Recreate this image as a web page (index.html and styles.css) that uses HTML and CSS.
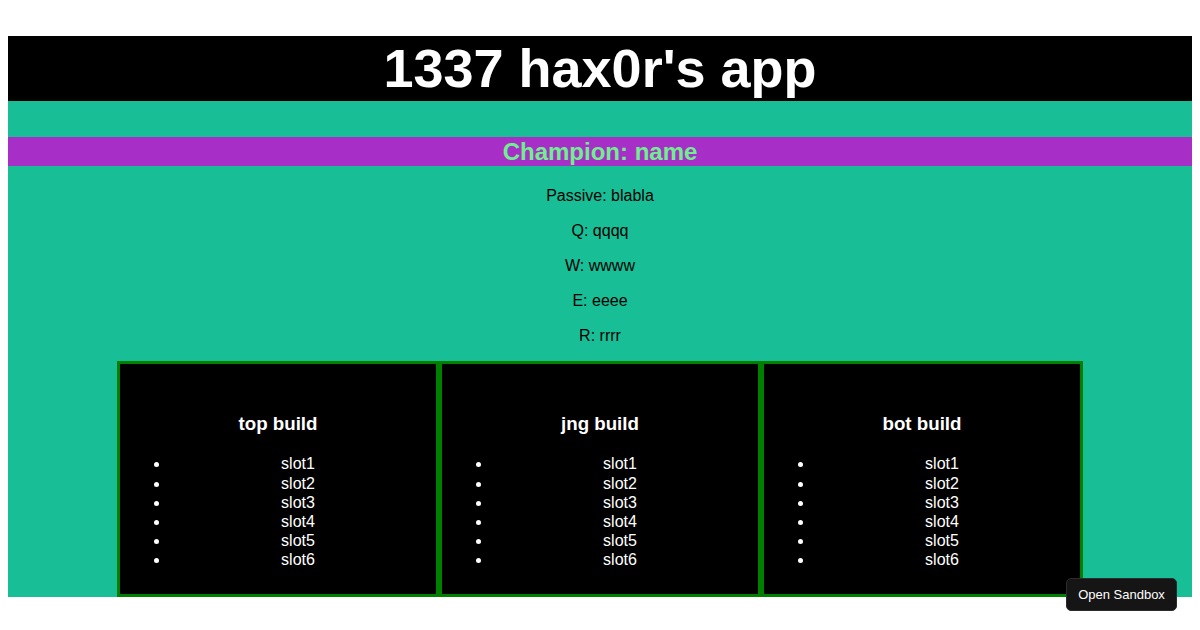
FILE: index.html
```html
<!DOCTYPE html>
<html lang="en">
<head>
  <meta charset="UTF-8">
  <title>1337 hax0r's app</title>
  <link rel="stylesheet" href="styles.css">
</head>
<body>
  <div class="app">
    <h1 class="title">1337 hax0r's app</h1>

    <div class="champion">
      <h2>Champion: name</h2>
      <p>Passive: blabla</p>
      <p>Q: qqqq</p>
      <p>W: wwww</p>
      <p>E: eeee</p>
      <p>R: rrrr</p>

      <div class="builds">
        <div class="build">
          <h3>top build</h3>
          <ul>
            <li>slot1</li>
            <li>slot2</li>
            <li>slot3</li>
            <li>slot4</li>
            <li>slot5</li>
            <li>slot6</li>
          </ul>
        </div>
        <div class="build">
          <h3>jng build</h3>
          <ul>
            <li>slot1</li>
            <li>slot2</li>
            <li>slot3</li>
            <li>slot4</li>
            <li>slot5</li>
            <li>slot6</li>
          </ul>
        </div>
        <div class="build">
          <h3>bot build</h3>
          <ul>
            <li>slot1</li>
            <li>slot2</li>
            <li>slot3</li>
            <li>slot4</li>
            <li>slot5</li>
            <li>slot6</li>
          </ul>
        </div>
      </div>
    </div>
  </div>

  <a class="sandbox-btn" href="#">Open Sandbox</a>
</body>
</html>
```

FILE: styles.css
```css
body {
  margin: 8px;
  font-family: "Liberation Sans", Arial, sans-serif;
  line-height: 1.2;
  background: #fff;
}
.app {
  margin-top: 28px;
  text-align: center;
}
.title {
  margin: 0;
  background: #000;
  color: #fff;
  font-size: 54px;
  font-weight: bold;
}
.champion {
  background: #17be96;
  padding-top: 36px;
}
.champion h2 {
  margin: 0 0 19.72px;
  padding-top: 1px;
  line-height: 28px;
  background: #a82ec8;
  color: #6ef08c;
  font-size: 24px;
}
.champion p {
  margin: 16px 0;
  font-size: 16px;
  color: #000;
}
.builds {
  display: flex;
  width: 966px;
  margin: 0 auto;
}
.build {
  flex: 1;
  background: #000;
  color: #fff;
  border: 3px solid #008000;
  padding: 30px 0 9px;
}
.build h3 {
  margin: 18.72px 0;
  font-size: 18.72px;
}
.build ul {
  margin: 16px 0;
  padding-left: 50px;
  font-size: 16px;
}
.build li {
  margin-right: 10px;
}
.sandbox-btn {
  position: fixed;
  right: 23px;
  bottom: 19px;
  width: 111px;
  height: 33px;
  box-sizing: border-box;
  display: flex;
  align-items: center;
  justify-content: center;
  background: #151515;
  border: 1px solid #2c2c2c;
  border-radius: 5px;
  color: #fff;
  font-size: 13px;
  text-decoration: none;
}
```
